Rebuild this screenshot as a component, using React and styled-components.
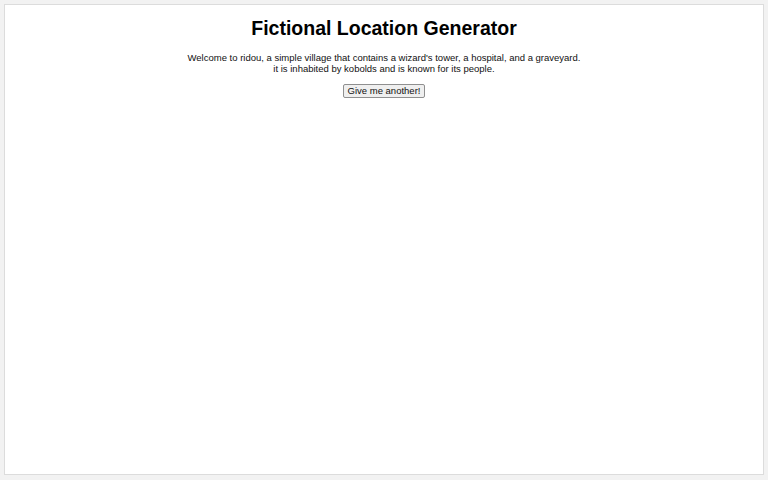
import styled, { createGlobalStyle } from "styled-components";

const GlobalStyle = createGlobalStyle`
  html, body {
    margin: 0;
    height: 100%;
    background: #f2f2f2;
  }
  #root {
    height: 100%;
  }
`;

const Page = styled.div`
  box-sizing: border-box;
  height: 100vh;
  padding: 4px 4px 5px 4px;
`;

const Panel = styled.main`
  box-sizing: border-box;
  height: 100%;
  background: #fff;
  border: 1px solid #dcdcdc;
  display: flex;
  flex-direction: column;
  align-items: center;
  font-family: "Liberation Sans", Arial, sans-serif;
  color: #000;
`;

const Title = styled.h1`
  font-size: 19.5px;
  font-weight: bold;
  margin: 12px 0 0;
  line-height: 22px;
`;

const Description = styled.p`
  font-size: 9.5px;
  line-height: 11px;
  text-align: center;
  margin: 13px 0 0;
  color: #111;
`;

const AnotherButton = styled.button`
  box-sizing: border-box;
  font-family: "Liberation Sans", Arial, sans-serif;
  font-size: 9.5px;
  margin-top: 10px;
  padding: 0 4px;
  height: 14px;
  line-height: 12px;
  background: #efefef;
  border: 1px solid #8f8f8f;
  border-radius: 2px;
  color: #111;
`;

const App = () => {
  return (
    <>
      <GlobalStyle />
      <Page>
        <Panel>
          <Title>Fictional Location Generator</Title>
          <Description>
            Welcome to ridou, a simple village that contains a wizard's tower, a
            hospital, and a graveyard.
            <br />
            it is inhabited by kobolds and is known for its people.
          </Description>
          <AnotherButton>Give me another!</AnotherButton>
        </Panel>
      </Page>
    </>
  );
};

export default App;
